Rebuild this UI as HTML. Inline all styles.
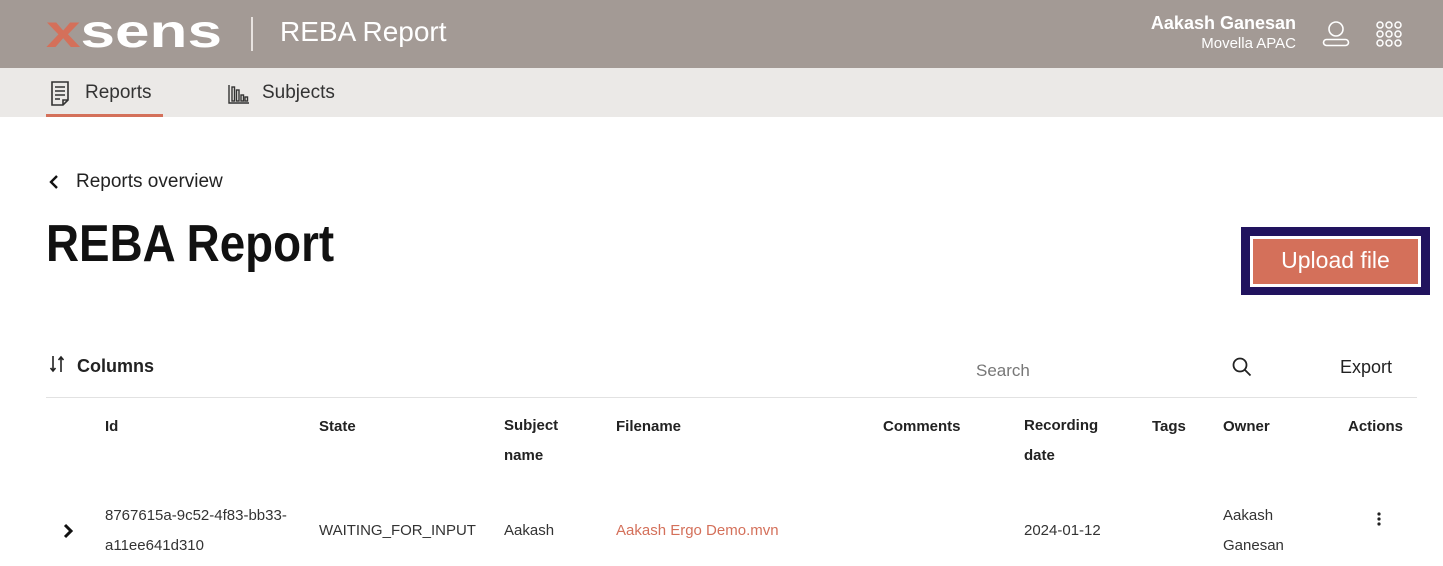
<!DOCTYPE html>
<html><head><meta charset="utf-8"><style>
*{margin:0;padding:0;box-sizing:border-box}
body{width:1443px;height:566px;overflow:hidden;background:#fff;font-family:"Liberation Sans",sans-serif;color:#222;position:relative}
.a{position:absolute;white-space:nowrap}
.hdr{position:absolute;left:0;top:0;width:1443px;height:68px;background:#a39a95}
.nav{position:absolute;left:0;top:68px;width:1443px;height:49px;background:#ebe9e7}
.th{font-weight:bold;font-size:15px;color:#222}
.td{font-size:15px;color:#333}
</style></head><body>
<div class="hdr"></div>
<svg class="a" style="left:44px;top:8px" width="180" height="48" viewBox="0 0 180 48"><text x="2" y="39" font-family="Liberation Sans, sans-serif" font-weight="bold" font-size="46" fill="#fff" textLength="176" lengthAdjust="spacingAndGlyphs"><tspan fill="#d4705a">x</tspan>sens</text></svg>
<div class="a" style="left:251px;top:17px;width:2px;height:34px;background:#e8e3e0"></div>
<div class="a" style="left:280px;top:16px;font-size:28px;color:#fff">REBA Report</div>
<div class="a" style="right:147px;top:13px;font-size:18px;font-weight:bold;color:#fff">Aakash Ganesan</div>
<div class="a" style="right:147px;top:35px;font-size:15px;color:#fff">Movella APAC</div>
<svg class="a" style="left:1320px;top:20px" width="32" height="28" viewBox="0 0 32 28" fill="none" stroke="#fff" stroke-width="1.6"><circle cx="16" cy="9" r="7"/><rect x="3.5" y="19.5" width="25" height="6" rx="3"/></svg>
<svg class="a" style="left:1376px;top:21px" width="28" height="26" viewBox="0 0 28 26" fill="none" stroke="#fff" stroke-width="1.5"><g><circle cx="4" cy="4" r="3"/><circle cx="13" cy="4" r="3"/><circle cx="22" cy="4" r="3"/><circle cx="4" cy="13" r="3"/><circle cx="13" cy="13" r="3"/><circle cx="22" cy="13" r="3"/><circle cx="4" cy="22" r="3"/><circle cx="13" cy="22" r="3"/><circle cx="22" cy="22" r="3"/></g></svg>
<div class="nav"></div>
<svg class="a" style="left:50px;top:80px" width="20" height="27" viewBox="0 0 20 27" fill="none" stroke="#333" stroke-width="1.6"><path d="M2 2h16v18l-5 5H2z"/><path d="M13 25v-5h5"/><path d="M5 7h10M5 11h10M5 15h10M5 19h5"/></svg>
<div class="a" style="left:85px;top:82px;font-size:19px;color:#333">Reports</div>
<div class="a" style="left:46px;top:114px;width:117px;height:3px;background:#d4705a"></div>
<svg class="a" style="left:228px;top:84px" width="22" height="20" viewBox="0 0 22 20" fill="none" stroke="#333" stroke-width="1.4"><path d="M1 1v18h20"/><rect x="4" y="3" width="2.5" height="14"/><rect x="8.5" y="6" width="2.5" height="11"/><rect x="13" y="11" width="2.5" height="6"/><rect x="17" y="13" width="2.5" height="4"/></svg>
<div class="a" style="left:262px;top:82px;font-size:19px;color:#333">Subjects</div>
<svg class="a" style="left:48px;top:174px" width="12" height="16" viewBox="0 0 12 16" fill="none" stroke="#111" stroke-width="2.4"><path d="M9 2L3 8l6 6"/></svg>
<div class="a" style="left:76px;top:171px;font-size:19px;color:#222">Reports overview</div>
<div class="a" style="left:46px;top:214px;font-size:52px;font-weight:bold;color:#111;transform:scaleX(0.88);transform-origin:left">REBA Report</div>
<div class="a" style="left:1241px;top:227px;width:189px;height:68px;background:#21135e"></div>
<div class="a" style="left:1250px;top:236px;width:171px;height:51px;background:#fff"></div>
<div class="a" style="left:1253px;top:239px;width:165px;height:45px;background:#d4705a;color:#fff;font-size:23px;text-align:center;line-height:43px">Upload file</div>
<svg class="a" style="left:49px;top:355px" width="16" height="18" viewBox="0 0 16 18" fill="none" stroke="#222" stroke-width="1.6"><path d="M4 1v15M1.5 13l2.5 3 2.5-3M12 17V2M9.5 5L12 2l2.5 3"/></svg>
<div class="a" style="left:77px;top:356px;font-size:18px;font-weight:bold;color:#222">Columns</div>
<div class="a" style="left:976px;top:361px;font-size:17px;color:#777">Search</div>
<svg class="a" style="left:1232px;top:357px" width="20" height="20" viewBox="0 0 20 20" fill="none" stroke="#222" stroke-width="1.8"><circle cx="8" cy="8" r="6.5"/><path d="M13 13l5.5 5.5"/></svg>
<div class="a" style="left:1340px;top:357px;font-size:18px;color:#222">Export</div>
<div class="a" style="left:46px;top:397px;width:1371px;height:1px;background:#e2e2e2"></div>
<div class="a th" style="left:105px;top:418px">Id</div>
<div class="a th" style="left:319px;top:418px">State</div>
<div class="a th" style="left:504px;top:411px;line-height:30px">Subject<br>name</div>
<div class="a th" style="left:616px;top:418px">Filename</div>
<div class="a th" style="left:883px;top:418px">Comments</div>
<div class="a th" style="left:1024px;top:411px;line-height:30px">Recording<br>date</div>
<div class="a th" style="left:1152px;top:418px">Tags</div>
<div class="a th" style="left:1223px;top:418px">Owner</div>
<div class="a th" style="left:1348px;top:418px">Actions</div>
<svg class="a" style="left:62px;top:523px" width="12" height="16" viewBox="0 0 12 16" fill="none" stroke="#111" stroke-width="3"><path d="M3 2l6 6-6 6"/></svg>
<div class="a td" style="left:105px;top:501px;line-height:30px">8767615a-9c52-4f83-bb33-<br>a11ee641d310</div>
<div class="a td" style="left:319px;top:522px">WAITING_FOR_INPUT</div>
<div class="a td" style="left:504px;top:522px">Aakash</div>
<div class="a td" style="left:616px;top:522px;color:#d4705a">Aakash Ergo Demo.mvn</div>
<div class="a td" style="left:1024px;top:522px">2024-01-12</div>
<div class="a td" style="left:1223px;top:501px;line-height:30px">Aakash<br>Ganesan</div>
<svg class="a" style="left:1376px;top:511px" width="6" height="16" viewBox="0 0 6 16" fill="#222"><circle cx="3" cy="3" r="1.6"/><circle cx="3" cy="8" r="1.6"/><circle cx="3" cy="13" r="1.6"/></svg>
</body></html>
